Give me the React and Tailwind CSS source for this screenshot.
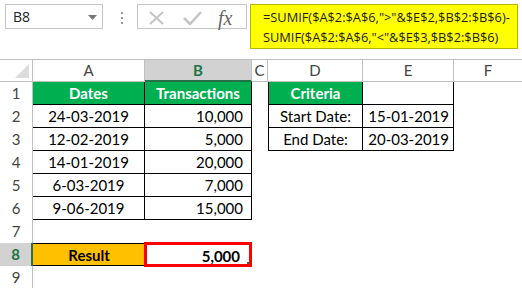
import React from "react";

const cell = "font-['Lato',sans-serif] text-[15px] text-black leading-[22px] whitespace-nowrap overflow-hidden";

function RowHdr({ n, active }) {
  return (
    <div
      className={
        active
          ? "bg-[#d2d2d2] border-r-2 border-[#217346] flex items-center justify-center font-['Lato',sans-serif] text-[15px] font-bold text-[#217346]"
          : "border-r border-[#c0c0c0] flex items-center justify-center font-['Lato',sans-serif] text-[15px] text-[#444]"
      }
    >
      {n}
    </div>
  );
}

export default function App() {
  const data = [
    ["24-03-2019", "10,000", "Start Date:", "15-01-2019"],
    ["12-02-2019", "5,000", "End Date:", "20-03-2019"],
    ["14-01-2019", "20,000"],
    ["6-03-2019", "7,000"],
    ["9-06-2019", "15,000"],
  ];
  return (
    <div className="w-[522px] h-[288px] bg-white overflow-hidden relative">
      {/* top bar */}
      <div className="h-[59px] relative">
        <div className="absolute left-[5px] top-[4px] w-[98px] h-[25px] border border-[#c6c6c6] flex items-center pl-[7px] font-['Open_Sans',sans-serif] text-[14px] text-[#222]">
          B8
          <svg className="absolute right-[5px] top-[10px]" width="9" height="5" viewBox="0 0 9 5">
            <path d="M0 0 L9 0 L4.5 5 Z" fill="#777" />
          </svg>
        </div>
        <div className="absolute left-[121px] top-[12px] flex flex-col gap-[3px]">
          <div className="w-[2px] h-[2px] bg-[#999]" />
          <div className="w-[2px] h-[2px] bg-[#999]" />
          <div className="w-[2px] h-[2px] bg-[#999]" />
        </div>
        <div className="absolute left-[137px] top-[4px] w-[110px] h-[25px] border border-[#c6c6c6]">
          <svg className="absolute left-[11px] top-[6px]" width="15" height="14" viewBox="0 0 15 14">
            <path d="M1 1 L14 13 M14 1 L1 13" stroke="#c4c4c4" strokeWidth="2" fill="none" />
          </svg>
          <svg className="absolute left-[45px] top-[6px]" width="19" height="14" viewBox="0 0 19 14">
            <path d="M1 7 L7 13 L18 1" stroke="#c4c4c4" strokeWidth="2.5" fill="none" />
          </svg>
          <div className="absolute left-[80px] top-[-2px] font-['Liberation_Serif',serif] italic text-[20px] text-[#666]">
            fx
          </div>
        </div>
        <div className="absolute left-[250px] top-[4px] w-[268px] h-[45px] bg-[#ffff00] border border-[#b5b500] pl-[12px] pt-[2px] font-['Open_Sans',sans-serif] text-[12.8px] leading-[20px] text-[#222] whitespace-nowrap">
          <div>=SUMIF($A$2:$A$6,"&gt;"&amp;$E$2,$B$2:$B$6)-</div>
          <div>SUMIF($A$2:$A$6,"&lt;"&amp;$E$3,$B$2:$B$6)</div>
        </div>
      </div>

      {/* grid */}
      <div className="grid grid-cols-[33px_112px_107px_16px_95px_91px_68px] auto-rows-[23px]">
        {/* header */}
        <div className="border-t border-b border-r border-[#c0c0c0] relative">
          <svg className="absolute right-[3px] bottom-[3px]" width="14" height="14" viewBox="0 0 14 14">
            <path d="M14 0 L14 14 L0 14 Z" fill="#dcdcdc" />
          </svg>
        </div>
        <div className="border-t border-b border-r border-[#c0c0c0] flex items-center justify-center font-['Lato',sans-serif] text-[15px] text-[#444]">A</div>
        <div className="border-t border-[#c0c0c0] border-b-2 border-b-[#217346] border-r bg-[#d2d2d2] flex items-center justify-center font-['Lato',sans-serif] text-[15px] font-bold text-[#217346]">B</div>
        <div className="border-t border-b border-r border-[#c0c0c0] flex items-center justify-center font-['Lato',sans-serif] text-[15px] text-[#444]">C</div>
        <div className="border-t border-b border-r border-[#c0c0c0] flex items-center justify-center font-['Lato',sans-serif] text-[15px] text-[#444]">D</div>
        <div className="border-t border-b border-r border-[#c0c0c0] flex items-center justify-center font-['Lato',sans-serif] text-[15px] text-[#444]">E</div>
        <div className="border-t border-b border-[#c0c0c0] flex items-center justify-center font-['Lato',sans-serif] text-[15px] text-[#444]">F</div>

        {/* row 1 */}
        <RowHdr n={1} />
        <div className={`${cell} bg-[#00b050] text-white font-bold text-center border-r border-b border-black`}>Dates</div>
        <div className={`${cell} bg-[#00b050] text-white font-bold text-center border-r border-b border-black`}>Transactions</div>
        <div />
        <div className={`${cell} bg-[#00b050] text-white font-bold text-center border-l border-r border-b border-black`}>Criteria</div>
        <div className={`${cell} border-r border-b border-black`} />
        <div />

        {data.map((r, i) => (
          <React.Fragment key={i}>
            <RowHdr n={i + 2} />
            <div className={`${cell} text-center border-r border-b border-black`}>{r[0]}</div>
            <div className={`${cell} text-right pr-[8px] border-r border-b border-black`}>{r[1]}</div>
            <div />
            {r[2] ? (
              <div className={`${cell} text-center border-l border-r border-b border-black`}>{r[2]}</div>
            ) : (
              <div />
            )}
            {r[3] ? (
              <div className={`${cell} text-right pr-[4px] border-r border-b border-black`}>{r[3]}</div>
            ) : (
              <div />
            )}
            <div />
          </React.Fragment>
        ))}

        {/* row 7 */}
        <RowHdr n={7} />
        <div /><div /><div /><div /><div /><div />

        {/* row 8 */}
        <RowHdr n={8} active />
        <div className={`${cell} bg-[#ffc000] font-bold text-center border-t border-b border-black`}>Result</div>
        <div className="relative">
          <div className={`absolute left-[-1px] top-[-1px] right-0 bottom-[-1px] border-[3px] border-[#ff0000] bg-white ${cell} font-bold text-right pr-[9px] leading-[19px]`}>
            5,000
            <div className="absolute right-0 bottom-0 w-[2px] h-[2px] bg-[#217346]" />
          </div>
        </div>
        <div /><div /><div /><div />

        {/* row 9 */}
        <RowHdr n={9} />
        <div /><div /><div /><div /><div /><div />
      </div>
    </div>
  );
}
